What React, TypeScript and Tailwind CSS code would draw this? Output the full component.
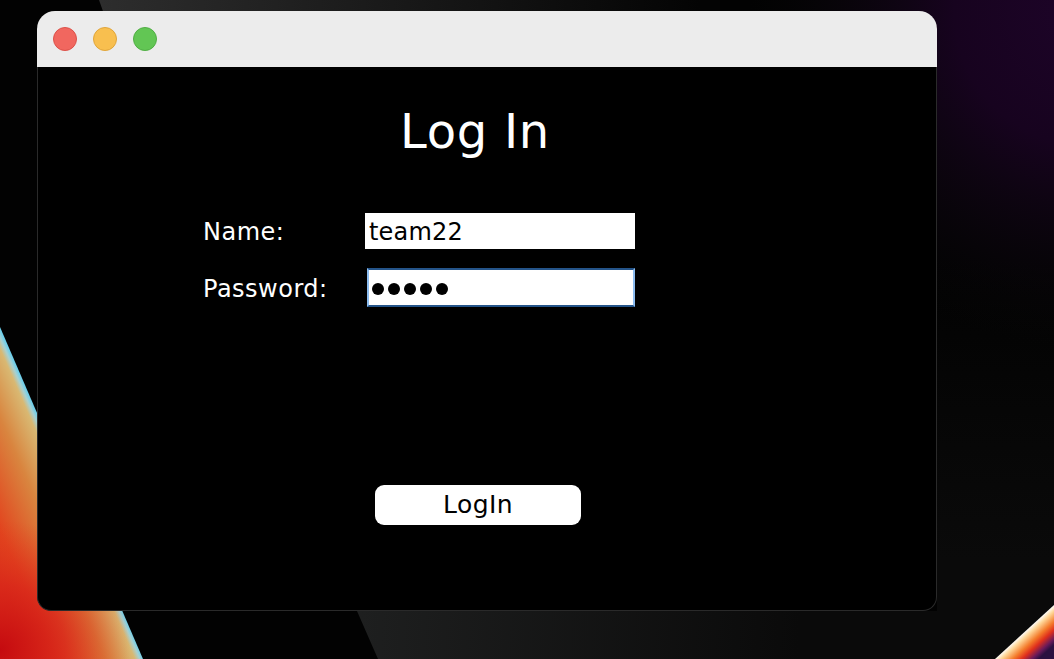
import React from "react";

function Wallpaper() {
  return (
    <svg className="absolute inset-0" width="1054" height="659" viewBox="0 0 1054 659">
      <defs>
        <linearGradient id="top" x1="100" y1="0" x2="700" y2="0" gradientUnits="userSpaceOnUse">
          <stop offset="0" stopColor="#2d2d2d" />
          <stop offset="1" stopColor="#040404" />
        </linearGradient>
        <linearGradient id="low" x1="360" y1="620" x2="800" y2="640" gradientUnits="userSpaceOnUse">
          <stop offset="0" stopColor="#1e1f1f" />
          <stop offset="1" stopColor="#0a0a0a" />
        </linearGradient>
        <radialGradient id="right" cx="1090" cy="10" r="340" gradientUnits="userSpaceOnUse">
          <stop offset="0" stopColor="#1e0429" />
          <stop offset="0.4" stopColor="#17031f" />
          <stop offset="1" stopColor="#0a0a0a" stopOpacity="0" />
        </radialGradient>
        <linearGradient id="fade" x1="1000" y1="260" x2="1000" y2="560" gradientUnits="userSpaceOnUse">
          <stop offset="0" stopColor="#0a0a0a" stopOpacity="0" />
          <stop offset="1" stopColor="#0a0a0a" />
        </linearGradient>
        <linearGradient id="fire" x1="68" y1="485" x2="-24" y2="525" gradientUnits="userSpaceOnUse">
          <stop offset="0" stopColor="#6ccfec" />
          <stop offset="0.035" stopColor="#a8d0d0" />
          <stop offset="0.08" stopColor="#d9b872" />
          <stop offset="0.35" stopColor="#d9853f" />
          <stop offset="0.8" stopColor="#e2441e" />
          <stop offset="1" stopColor="#dd3a1a" />
        </linearGradient>
        <radialGradient id="red" cx="0" cy="650" r="130" gradientUnits="userSpaceOnUse">
          <stop offset="0" stopColor="#c50a0f" />
          <stop offset="0.5" stopColor="#d8241a" stopOpacity="0.75" />
          <stop offset="1" stopColor="#e0401e" stopOpacity="0" />
        </radialGradient>
        <linearGradient id="stripe" x1="1024" y1="632" x2="1044" y2="654" gradientUnits="userSpaceOnUse">
          <stop offset="0" stopColor="#ffffff" />
          <stop offset="0.15" stopColor="#ffd89a" />
          <stop offset="0.42" stopColor="#f47a2a" />
          <stop offset="0.62" stopColor="#e0301c" />
          <stop offset="0.85" stopColor="#6a1a5a" />
          <stop offset="1" stopColor="#2a1040" />
        </linearGradient>
      </defs>
      <rect width="1054" height="659" fill="#020202" />
      <rect x="937" y="260" width="117" height="399" fill="url(#fade)" />
      <rect x="700" width="354" height="400" fill="url(#right)" />
      <polygon points="99,0 720,0 720,14 104,14" fill="url(#top)" />
      <polygon points="357,611 1054,611 1054,659 378,659" fill="url(#low)" />
      <polygon points="0,327 143,659 0,659" fill="url(#fire)" />
      <rect x="0" y="520" width="131" height="139" fill="url(#red)" />
      <polygon points="995,659 1054,605 1054,659" fill="url(#stripe)" />
    </svg>
  );
}

function Light({ bg, ring }: { bg: string; ring: string }) {
  return <div className={`h-6 w-6 rounded-full border ${bg} ${ring}`} />;
}

export default function App() {
  return (
    <div className="relative h-[659px] w-[1054px] overflow-hidden bg-black font-['DejaVu_Sans',sans-serif]">
      <Wallpaper />
      {/* the app window */}
      <div className="absolute left-[37px] top-[11px] flex h-[600px] w-[900px] flex-col">
        <div className="flex h-14 shrink-0 items-center gap-4 rounded-t-[18px] bg-[#ececec] pl-4">
          <Light bg="bg-[#f1675f]" ring="border-[#dc5149]" />
          <Light bg="bg-[#f8bf4f]" ring="border-[#e0a53a]" />
          <Light bg="bg-[#62c654]" ring="border-[#50ae44]" />
        </div>
        <div className="flex flex-1 flex-col rounded-b-[14px] border border-t-0 border-[#2a2a2a] bg-black">
          <h1 className="mt-[34px] pr-[24px] text-center text-[48px] leading-[60px] tracking-[0.7px] text-white">Log In</h1>
          <div className="ml-[165px] mt-[52px] flex flex-col">
            <div className="flex h-9 items-center pt-[2px]">
              <span className="w-[162px] text-2xl leading-none tracking-[0.5px] text-white">Name:</span>
              <div className="-mt-[2px] flex h-9 w-[270px] items-center bg-white pl-1 pt-[2px] text-2xl leading-none tracking-[0.2px] text-black">team22</div>
            </div>
            <div className="mt-[19px] flex h-[39px] items-center pt-[2px]">
              <span className="w-[164px] text-2xl leading-none tracking-[0.5px] text-white">Password:</span>
              <div className="-mt-[2px] flex h-[39px] w-[268px] items-center gap-1 border-2 border-[#245489] border-x-[#8cbcf0] bg-white pl-[3px] pt-[2px]">
                {[0, 1, 2, 3, 4].map((i) => (
                  <span key={i} className="h-3 w-3 rounded-full bg-black" />
                ))}
              </div>
            </div>
          </div>
          <button className="ml-[337px] mt-[178px] flex h-10 w-[206px] items-center justify-center rounded-[9px] bg-white pb-[2px] text-[25px] leading-none tracking-[0.4px] text-black">
            LogIn
          </button>
        </div>
      </div>
    </div>
  );
}
